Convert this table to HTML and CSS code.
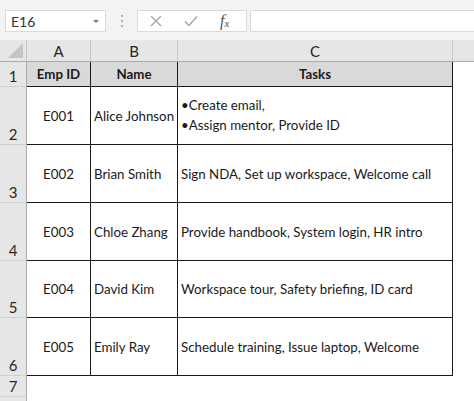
FILE: index.html
```html
<!DOCTYPE html>
<html>
<head>
<meta charset="utf-8">
<link rel="stylesheet" href="styles.css">
</head>
<body>
<div class="toolbar">
  <div class="namebox"><span class="ref">E16</span><span class="dd"></span></div>
  <div class="grip"><i></i><i></i><i></i></div>
  <div class="fbtns">
    <svg class="ico" width="16" height="16" viewBox="0 0 16 16"><path d="M3 3 L13 13 M13 3 L3 13" stroke="#a6a6a6" stroke-width="1.4" fill="none"/></svg>
    <svg class="ico" width="16" height="16" viewBox="0 0 16 16"><path d="M2 8.5 L6 12.5 L14 3.5" stroke="#a6a6a6" stroke-width="1.5" fill="none"/></svg>
    <span class="fx">f<span class="x">x</span></span>
  </div>
  <div class="finput"></div>
</div>
<div class="sheet">
  <div class="corner"><span class="tri"></span></div>
  <div class="ch">A</div>
  <div class="ch">B</div>
  <div class="ch">C</div>
  <div class="ch rest"></div>

  <div class="rh">1</div>
  <div class="c hd">Emp ID</div>
  <div class="c hd">Name</div>
  <div class="c hd">Tasks</div>
  <div class="e"></div>

  <div class="rh">2</div>
  <div class="c ctr">E001</div>
  <div class="c lft">Alice Johnson</div>
  <div class="c lft multi"><div>•Create email,</div><div>•Assign mentor, Provide ID</div></div>
  <div class="e"></div>

  <div class="rh">3</div>
  <div class="c ctr">E002</div>
  <div class="c lft">Brian Smith</div>
  <div class="c lft">Sign NDA, Set up workspace, Welcome call</div>
  <div class="e"></div>

  <div class="rh">4</div>
  <div class="c ctr">E003</div>
  <div class="c lft">Chloe Zhang</div>
  <div class="c lft">Provide handbook, System login, HR intro</div>
  <div class="e"></div>

  <div class="rh">5</div>
  <div class="c ctr">E004</div>
  <div class="c lft">David Kim</div>
  <div class="c lft">Workspace tour, Safety briefing, ID card</div>
  <div class="e"></div>

  <div class="rh">6</div>
  <div class="c ctr">E005</div>
  <div class="c lft">Emily Ray</div>
  <div class="c lft">Schedule training, Issue laptop, Welcome</div>
  <div class="e"></div>

  <div class="rh">7</div>
  <div class="e"></div>
  <div class="e"></div>
  <div class="e"></div>
  <div class="e"></div>

  <div class="rh"></div>
  <div class="e"></div>
  <div class="e"></div>
  <div class="e"></div>
  <div class="e"></div>
</div>
</body>
</html>
```
FILE: styles.css
```css
* { box-sizing: border-box; }
html, body { margin: 0; padding: 0; background: #ffffff; overflow: hidden; }
body {
  width: 474px;
  height: 401px;
  font-family: Lato, "Liberation Sans", sans-serif;
  color: #1a1a1a;
}
.toolbar {
  height: 40px;
  background: #f3f3f3;
  display: flex;
  align-items: flex-start;
  padding: 10px 0 0 5px;
}
.namebox {
  width: 101px;
  height: 22px;
  background: #fff;
  border: 1px solid #dadada;
  display: flex;
  align-items: center;
  justify-content: space-between;
  padding: 0 6px 0 5px;
  font-size: 14px;
  color: #333;
}
.dd {
  width: 0; height: 0;
  border-left: 3px solid transparent;
  border-right: 3px solid transparent;
  border-top: 3px solid #777;
}
.grip {
  width: 31px;
  height: 22px;
  display: flex;
  flex-direction: column;
  align-items: center;
  justify-content: center;
  gap: 3px;
}
.grip i {
  display: block;
  width: 2px;
  height: 2px;
  background: #b0b0b0;
}
.fbtns {
  width: 110px;
  height: 22px;
  background: #fff;
  border: 1px solid #dadada;
  display: flex;
  align-items: center;
  padding-left: 10px;
  gap: 19px;
}
.fx {
  font-family: "Liberation Serif", serif;
  font-style: italic;
  font-size: 16px;
  color: #555;
  margin-left: 2px;
}
.fx .x { font-size: 11px; position: relative; top: 1px; }
.finput {
  margin-left: 3px;
  flex: 1;
  height: 22px;
  background: #fff;
  border: 1px solid #dadada;
  border-right: none;
}
.sheet {
  display: grid;
  grid-template-columns: 27px 64px 87px 275px 21px;
  grid-template-rows: 22px 25px 58px 58px 58px 57px 58px 21px 21px;
  font-size: 13.3px;
}
.corner {
  background: #e6e6e6;
  border-right: 1px solid #c8c8c8;
  border-bottom: 1px solid #ababab;
  position: relative;
}
.tri {
  position: absolute;
  right: 3px;
  bottom: 3px;
  width: 0; height: 0;
  border-left: 15px solid transparent;
  border-bottom: 15px solid #c4c4c4;
}
.ch {
  background: #e6e6e6;
  border-right: 1px solid #c8c8c8;
  border-bottom: 1px solid #ababab;
  display: flex;
  align-items: center;
  justify-content: center;
  color: #262626;
  font-size: 15px;
}
.ch.rest { border-right: none; }
.rh {
  background: #e6e6e6;
  border-right: 1px solid #ababab;
  border-bottom: 1px solid #d0d0d0;
  display: flex;
  align-items: flex-end;
  justify-content: center;
  color: #262626;
  font-size: 15px;
  padding-bottom: 1px;
  line-height: 18px;
}
.c {
  border-right: 1px solid #1a1a1a;
  border-bottom: 1px solid #1a1a1a;
  display: flex;
  align-items: center;
  white-space: nowrap;
}
.hd {
  background: #d9d9d9;
  font-weight: bold;
  justify-content: center;
}
.ctr { justify-content: center; }
.lft { padding-left: 3px; }
.multi {
  flex-direction: column;
  align-items: flex-start;
  justify-content: center;
  line-height: 19.5px;
}
.e { background: #fff; }
```
